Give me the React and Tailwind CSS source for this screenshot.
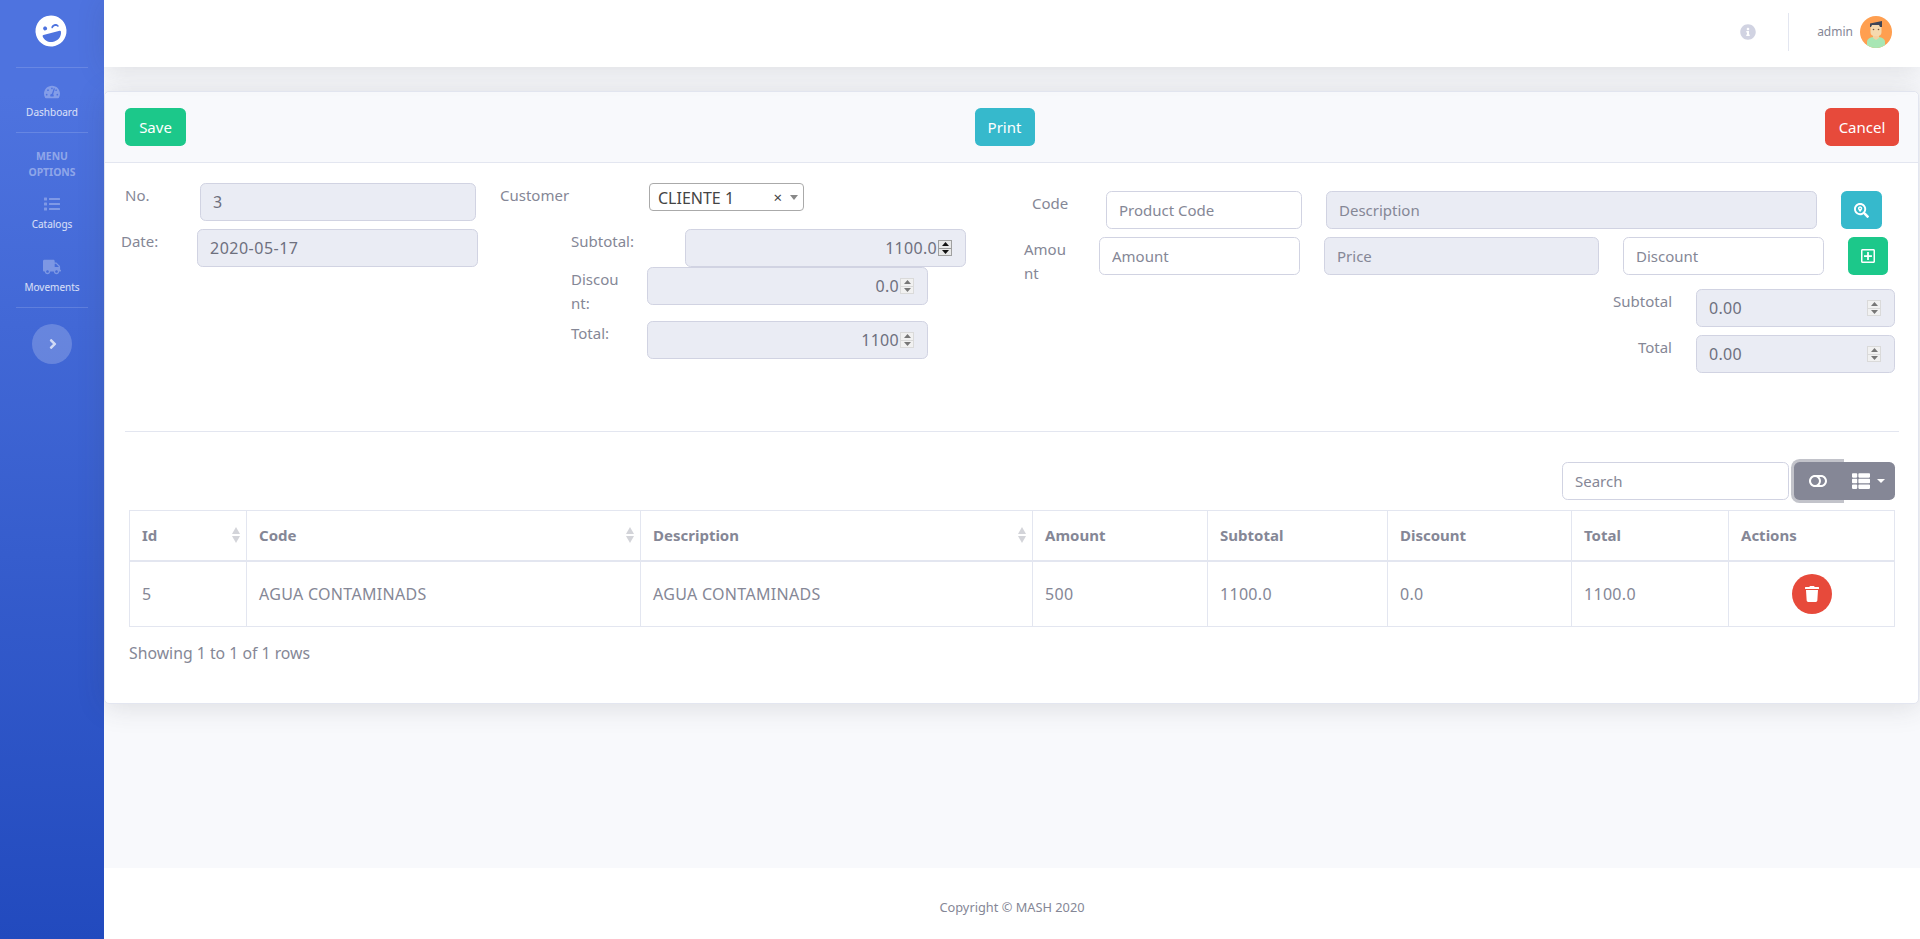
import React from "react";
import { FaLaughWink, FaTachometerAlt, FaList, FaTruck, FaAngleRight, FaInfoCircle, FaSearchLocation, FaRegPlusSquare, FaToggleOff, FaThList, FaTrash } from "react-icons/fa";

const font = "font-['Noto_Sans','Open_Sans',sans-serif]";
const Spin = ({ dark }) => (
  <span className={`ml-[1px] flex h-[16px] w-[14px] shrink-0 flex-col border ${dark ? "border-[#a0a0a0] bg-[#e8e8e8]" : "border-[#dadada] bg-[#f1f1f1]"}`}>
    <span className="flex flex-1 items-center justify-center">
      <svg width="7" height="4" viewBox="0 0 7 4"><path d="M3.5 0 7 4H0z" fill={dark ? "#111" : "#777"} /></svg>
    </span>
    <span className={`h-px ${dark ? "bg-[#999]" : "bg-[#dadada]"}`} />
    <span className="flex flex-1 items-center justify-center">
      <svg width="7" height="4" viewBox="0 0 7 4"><path d="M0 0h7L3.5 4z" fill={dark ? "#111" : "#777"} /></svg>
    </span>
  </span>
);

const Label = ({ className = "", children }) => (
  <label className={`block shrink-0 text-[15px] leading-6 text-[#858796] ${className}`}>{children}</label>
);

const Field = ({ className = "", value, placeholder, disabled }) => (
  <input
    readOnly
    value={value ?? ""}
    placeholder={placeholder}
    className={`h-[38px] shrink-0 rounded-[5.6px] border border-[#d1d3e2] px-3 text-[#6e707e] outline-none placeholder:text-[#858796] ${value ? "text-[16px] tracking-[0.5px]" : "text-[15px]"} ${disabled ? "bg-[#eaecf4]" : "bg-white"} ${className}`}
  />
);

const NumField = ({ className = "", value, dark, left }) => (
  <div className={`flex h-[38px] shrink-0 items-center rounded-[5.6px] border border-[#d1d3e2] bg-[#eaecf4] pl-3 pr-[13px] text-[16px] tracking-[0.3px] text-[#6e707e] ${className}`}>
    <input readOnly value={value} className={`min-w-0 flex-1 bg-transparent outline-none ${left ? "text-left" : "text-right"}`} />
    <Spin dark={dark} />
  </div>
);

const SideRule = () => <div className="mx-4 h-px shrink-0 bg-white/15" />;

const SideItem = ({ icon: Icon, label, className = "", iconClass = "h-4 w-4" }) => (
  <div className={`flex flex-col items-center ${className}`}>
    <Icon className={`${iconClass} text-white/30`} />
    <span className="mt-[4px] text-[10px] leading-4 text-white/80">{label}</span>
  </div>
);

const SortArrows = () => (
  <svg className="absolute right-[6px] top-1/2 -translate-y-1/2" width="8" height="16" viewBox="0 0 8 16">
    <path d="M4 0 8 7H0z" fill="#d3d4d9" />
    <path d="M0 9h8l-4 7z" fill="#d3d4d9" />
  </svg>
);

const Th = ({ children, sort }) => (
  <th className="relative border border-b-2 border-[#e3e6f0] px-3 text-left text-[15px] font-bold text-[#858796]">
    {children}
    {sort && <SortArrows />}
  </th>
);
const Td = ({ children }) => <td className="border border-[#e3e6f0] px-3 text-[16px] tracking-[0.3px] text-[#858796]">{children}</td>;

const Avatar = () => (
  <svg width="32" height="32" viewBox="0 0 32 32" className="ml-[7px]">
    <circle cx="16" cy="16" r="16" fill="#ff9f50" />
    <clipPath id="av"><circle cx="16" cy="16" r="16" /></clipPath>
    <g clipPath="url(#av)">
      <path d="M7 32v-6c0-3 3-4.500 6-5h6c3 .5 6 2 6 5v6z" fill="#a8e6b4" />
      <path d="M13 18h6v4l-3 2-3-2z" fill="#f3d2a2" />
      <rect x="10.500" y="8" width="11" height="12" rx="4" fill="#f6d9ae" />
      <path d="M10 11V7.500L22 5v6h-2l-1-2h-7l-1 2z" fill="#3f4657" />
      <circle cx="13.500" cy="13.500" r=".8" fill="#7a5a3c" />
      <circle cx="18.500" cy="13.500" r=".8" fill="#7a5a3c" />
    </g>
  </svg>
);

export default function App() {
  return (
    <div className={`flex h-[939px] w-full overflow-hidden bg-[#f8f9fc] ${font}`}>
      <aside className="flex h-full w-[104px] shrink-0 flex-col bg-gradient-to-b from-[#4e73df] from-10% to-[#224abe]">
        <div className="flex h-[67px] shrink-0 items-center justify-center pr-[2px] pb-[5px]">
          <FaLaughWink className="h-8 w-8 -rotate-[15deg] text-white" />
        </div>
        <SideRule />
        <SideItem icon={FaTachometerAlt} label="Dashboard" className="h-[64px] pt-4" />
        <SideRule />
        <div className="pt-[15px] text-center text-[10.4px] font-bold leading-4 text-white/40">
          MENU<br />OPTIONS
        </div>
        <SideItem icon={FaList} label="Catalogs" className="pt-4" />
        <SideItem icon={FaTruck} label="Movements" iconClass="h-4 w-[18px]" className="pt-[27px]" />
        <div className="mx-4 mt-3 h-px shrink-0 bg-white/15" />
        <div className="mx-auto mt-4 flex h-10 w-10 items-center justify-center rounded-full bg-white/20">
          <FaAngleRight className="ml-[1px] h-4 w-4 text-white/70" />
        </div>
      </aside>

      <div className="flex min-w-0 flex-1 flex-col">
        <header className="relative z-10 flex h-[67px] shrink-0 items-center justify-end bg-white pr-[28px] pb-[4px] shadow-[0_2.4px_28px_0_rgba(58,59,69,0.15)]">
          <FaInfoCircle className="h-4 w-4 text-[#d1d3e2]" />
          <div className="ml-[32px] mr-[28px] h-[38px] w-px bg-[#e3e6f0]" />
          <span className="text-[12px] text-[#858796]">admin</span>
          <Avatar />
        </header>

        <main className="flex-1 pt-6">
          <section className="flex h-[613px] w-[1815px] flex-col rounded-[5px] border border-[#e3e6f0] bg-white shadow-[0_2.4px_28px_0_rgba(58,59,69,0.15)]">
            <div className="flex h-[71px] shrink-0 items-center justify-between rounded-t-[5px] border-b border-[#e3e6f0] bg-[#f8f9fc] pl-5 pr-[19px]">
              <button className="h-[38px] w-[61px] rounded-[5.6px] bg-[#1cc88a] text-[15px] text-white">Save</button>
              <button className="mr-[2px] h-[38px] w-[60px] rounded-[5.6px] bg-[#36b9cc] text-[15px] text-white">Print</button>
              <button className="h-[38px] w-[74px] rounded-[5.6px] bg-[#e74a3b] text-[15px] text-white">Cancel</button>
            </div>

            <div className="flex h-[268px] shrink-0">
              <div className="ml-4 w-[845px] shrink-0 pt-5">
                <div className="flex">
                  <Label className="ml-1 w-[75px]">No.</Label>
                  <Field disabled value="3" className="w-[276px]" />
                  <Label className="ml-6 w-[149px]">Customer</Label>
                  <div className="flex h-[28px] w-[155px] shrink-0 items-center rounded-[4px] border border-[#aaaaaa] bg-white pl-2 pr-[5px] pt-[1px] text-[16px] text-[#444444]">
                    <span className="flex-1">CLIENTE 1</span>
                    <span className="mr-[8px] text-[15px] leading-none">×</span>
                    <svg width="8" height="5" viewBox="0 0 8 5"><path d="M0 0h8L4 5z" fill="#888888" /></svg>
                  </div>
                </div>
                <div className="mt-2 flex">
                  <Label className="w-[76px]">Date:</Label>
                  <Field disabled value="2020-05-17" className="w-[281px]" />
                  <Label className="ml-[93px] w-[114px]">Subtotal:</Label>
                  <NumField value="1100.0" dark className="w-[281px]" />
                </div>
                <div className="ml-[450px] flex h-[54px]">
                  <Label className="w-[76px]">Discou<br />nt:</Label>
                  <NumField value="0.0" className="w-[281px]" />
                </div>
                <div className="ml-[450px] flex">
                  <Label className="w-[76px]">Total:</Label>
                  <NumField value="1100" className="w-[281px]" />
                </div>
              </div>

              <div className="ml-[58px] w-[871px] shrink-0 pt-7">
                <div className="flex">
                  <Label className="ml-2 w-[74px]">Code</Label>
                  <Field placeholder="Product Code" className="w-[196px]" />
                  <Field disabled placeholder="Description" className="ml-6 w-[491px]" />
                  <button className="ml-6 flex h-[38px] w-[41px] items-center justify-center rounded-[5.6px] bg-[#36b9cc] text-white">
                    <FaSearchLocation className="h-[15px] w-[15px]" />
                  </button>
                </div>
                <div className="mt-2 flex">
                  <Label className="w-[75px]">Amou<br />nt</Label>
                  <Field placeholder="Amount" className="w-[201px]" />
                  <Field disabled placeholder="Price" className="ml-6 w-[275px]" />
                  <Field placeholder="Discount" className="ml-6 w-[201px]" />
                  <button className="ml-6 flex h-[38px] w-[40px] items-center justify-center rounded-[5.6px] bg-[#1cc88a] text-white">
                    <FaRegPlusSquare className="h-4 w-4" />
                  </button>
                </div>
                <div className="mt-1 flex justify-end">
                  <Label>Subtotal</Label>
                  <NumField left value="0.00" className="ml-6 w-[199px]" />
                </div>
                <div className="mt-2 flex justify-end">
                  <Label>Total</Label>
                  <NumField left value="0.00" className="ml-6 w-[199px]" />
                </div>
              </div>
            </div>

            <div className="ml-5 mr-[19px] h-px shrink-0 bg-[#e3e6f0]" />

            <div className="ml-6 mr-[23px] mt-[30px] flex-1">
              <div className="flex justify-end">
                <Field placeholder="Search" className="w-[227px]" />
                <button className="relative z-10 ml-[5px] flex h-[38px] w-[47px] items-center justify-center rounded-l-[5.6px] bg-[#858796] text-white shadow-[0_0_0_3px_rgba(133,135,150,0.5)]">
                  <FaToggleOff className="h-4 w-[18px]" />
                </button>
                <button className="flex h-[38px] w-[54px] items-center justify-center rounded-r-[5.6px] bg-[#858796] text-white">
                  <FaThList className="h-[18px] w-[18px]" />
                  <svg className="ml-[7px]" width="8" height="4" viewBox="0 0 8 4"><path d="M0 0h8L4 4z" fill="#fff" /></svg>
                </button>
              </div>
              <table className="mt-[10px] w-[1765px] table-fixed border-collapse">
                <colgroup>
                  <col className="w-[117px]" />
                  <col className="w-[394px]" />
                  <col className="w-[392px]" />
                  <col className="w-[175px]" />
                  <col className="w-[180px]" />
                  <col className="w-[184px]" />
                  <col className="w-[157px]" />
                  <col className="w-[166px]" />
                </colgroup>
                <thead>
                  <tr className="h-[50px]">
                    <Th sort>Id</Th>
                    <Th sort>Code</Th>
                    <Th sort>Description</Th>
                    <Th>Amount</Th>
                    <Th>Subtotal</Th>
                    <Th>Discount</Th>
                    <Th>Total</Th>
                    <Th>Actions</Th>
                  </tr>
                </thead>
                <tbody>
                  <tr className="h-[66px]">
                    <Td>5</Td>
                    <Td>AGUA CONTAMINADS</Td>
                    <Td>AGUA CONTAMINADS</Td>
                    <Td>500</Td>
                    <Td>1100.0</Td>
                    <Td>0.0</Td>
                    <Td>1100.0</Td>
                    <Td>
                      <button className="mx-auto flex h-10 w-10 items-center justify-center rounded-full bg-[#e74a3b] text-white">
                        <FaTrash className="h-4 w-[14px]" />
                      </button>
                    </Td>
                  </tr>
                </tbody>
              </table>
              <p className="mt-[14px] text-[15.8px] leading-6 text-[#858796]">Showing 1 to 1 of 1 rows</p>
            </div>
          </section>
        </main>

        <footer className="flex h-[71px] shrink-0 items-center justify-center bg-white pt-[8px] text-[12.8px] text-[#858796]">
          Copyright © MASH 2020
        </footer>
      </div>
    </div>
  );
}
